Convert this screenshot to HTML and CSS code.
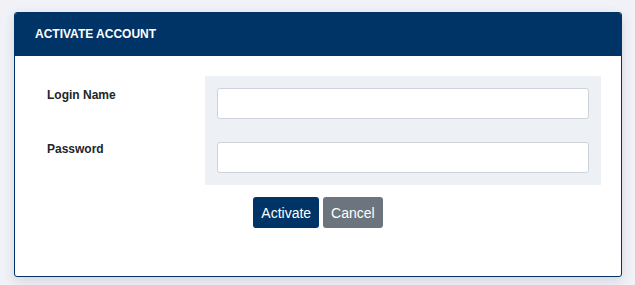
FILE: index.html
```html
<!DOCTYPE html>
<html>
<head>
<meta charset="utf-8">
<link rel="stylesheet" href="styles.css">
</head>
<body>
<div class="card">
  <div class="card-header">ACTIVATE ACCOUNT</div>
  <div class="card-body">
    <div class="form-row">
      <div class="labels">
        <div class="label">Login Name</div>
        <div class="label">Password</div>
      </div>
      <div class="panel">
        <input class="input" type="text">
        <input class="input" type="password">
      </div>
    </div>
    <div class="actions">
      <button class="btn btn-primary">Activate</button>
      <button class="btn btn-secondary">Cancel</button>
    </div>
  </div>
</div>
</body>
</html>
```
FILE: styles.css
```css
html, body {
  margin: 0;
  padding: 0;
}
body {
  background: #f1f2f7;
  font-family: "Liberation Sans", Arial, sans-serif;
  padding: 12px 13px 0 14px;
  height: 285px;
  box-sizing: border-box;
}
.card {
  width: 608px;
  height: 265px;
  box-sizing: border-box;
  border: 1px solid #003366;
  border-radius: 3px;
  background: #ffffff;
  box-shadow: 0 4px 12px rgba(40, 50, 80, 0.14);
  overflow: hidden;
}
.card-header {
  background: #003366;
  color: #ffffff;
  font-weight: bold;
  font-size: 12px;
  height: 43px;
  line-height: 42px;
  padding-left: 20px;
}
.card-body {
  padding: 20px 20px 0 32px;
}
.form-row {
  display: flex;
  align-items: flex-start;
}
.labels {
  width: 158px;
  padding-top: 12px;
}
.label {
  font-size: 12px;
  font-weight: bold;
  color: #222529;
  height: 54px;
  line-height: 14px;
}
.label:last-child {
  height: 14px;
}
.panel {
  flex: 1;
  background: #edf0f5;
  padding: 12px;
  display: flex;
  flex-direction: column;
  gap: 23px;
}
.input {
  display: block;
  height: 31px;
  box-sizing: border-box;
  border: 1px solid #ced2da;
  border-radius: 3px;
  background: #ffffff;
  margin: 0;
  width: 100%;
}
.actions {
  display: flex;
  justify-content: center;
  gap: 4px;
  margin-top: 12px;
  margin-left: -12px;
}
.btn {
  font-family: "Liberation Sans", Arial, sans-serif;
  font-size: 14px;
  color: #ffffff;
  border: none;
  border-radius: 3px;
  height: 31px;
  padding: 0 8px;
  margin: 0;
}
.btn-primary {
  background: #003366;
}
.btn-secondary {
  background: #6c757d;
}
```
